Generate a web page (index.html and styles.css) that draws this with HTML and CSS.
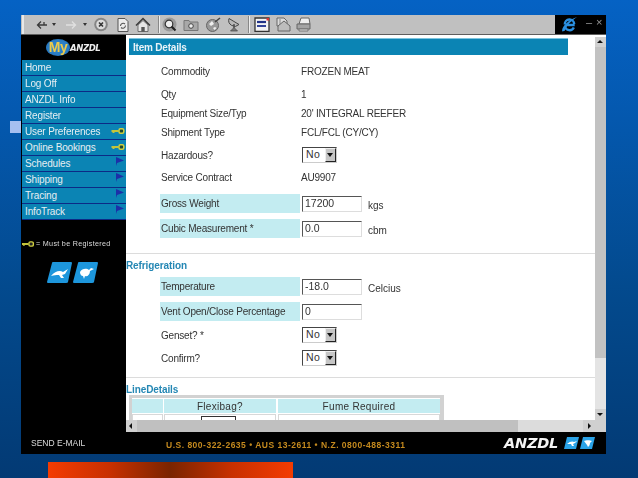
FILE: index.html
```html
<!DOCTYPE html>
<html lang="en">
<head>
<meta charset="utf-8">
<title>MyANZDL Item Details</title>
<link rel="stylesheet" href="styles.css">
</head>
<body>
<span class="bullet"></span>
<div class="window">
  <div class="toolbar">
    <div class="tools">
      <svg class="ic t-back" viewBox="0 0 12 15"><path d="M11 8H2M5 4.500 1.500 8 5 11.500M8 5v3" fill="none" stroke="#3a3a3a" stroke-width="1.300"/></svg>
      <i class="drop d1"></i>
      <svg class="ic t-fwd" viewBox="0 0 12 15"><path d="M1 8h9M7 4.500 10.500 8 7 11.500" fill="none" stroke="#e0e0e0" stroke-width="1.300"/></svg>
      <i class="drop d2"></i>
      <svg class="ic t-stop" viewBox="0 0 14 15"><circle cx="7" cy="7.500" r="6.800" fill="#858585"/><circle cx="7" cy="7.500" r="4.800" fill="#dcdcdc"/><path d="m5 5.500 4 4M9 5.500l-4 4" stroke="#333" stroke-width="1.600"/></svg>
      <svg class="ic t-ref" viewBox="0 0 12 15"><path d="M1 1.500h7l3 3v10H1z" fill="#ececec" stroke="#555"/><path d="M3.500 9a2.700 2.700 0 0 1 4.500-2M8.500 8.500A2.700 2.700 0 0 1 4 10.500" fill="none" stroke="#555" stroke-width="1.100"/></svg>
      <svg class="ic t-home" viewBox="0 0 16 15"><path d="M1 8.500 8 1.500l7 7" fill="none" stroke="#3a3a3a" stroke-width="1.500"/><path d="M3 8v6.500h10V8L8 3.500z" fill="#e6e6e6" stroke="#555" stroke-width=".8"/><path d="M6.300 10h3.400v4.500H6.300z" fill="#555"/></svg>
      <span class="sep s1"></span>
      <svg class="ic t-search" viewBox="0 0 15 15"><circle cx="7.500" cy="7.500" r="7" fill="#9a9a9a"/><circle cx="7" cy="7" r="3.800" fill="#eee" stroke="#333" stroke-width="1.200"/><path d="m9.500 9.500 4 4" stroke="#222" stroke-width="2.200"/></svg>
      <svg class="ic t-fav" viewBox="0 0 16 15"><path d="M1 3.500h5l1 1.500h8v8.500H1z" fill="#a8a8a8" stroke="#777"/><circle cx="8" cy="9" r="2.300" fill="#eee" stroke="#444"/></svg>
      <svg class="ic t-hist" viewBox="0 0 16 15"><circle cx="7.500" cy="8.500" r="6" fill="#999" stroke="#666"/><path d="M4 7l3-3 2 3-3 2zM8 11l2-1 1.500 1-2 2z" fill="#f0f0f0"/><path d="m10 5 5-4" stroke="#444" stroke-width="1.600"/></svg>
      <svg class="ic t-chan" viewBox="0 0 14 15"><path d="M2 1.500a6 6 0 0 0 10 6z" fill="#b8b8b8" stroke="#444"/><path d="M7 7v4" stroke="#444" stroke-width="1.300"/><path d="M3.500 14h7L7 10.500z" fill="#777" stroke="#444" stroke-width=".7"/></svg>
      <span class="sep s2"></span>
      <svg class="ic t-full" viewBox="0 0 16 15"><path d="M1 1h14v13.500H1z" fill="#f4f4f4" stroke="#333" stroke-width="1.300"/><path d="M3 5h9" stroke="#223388" stroke-width="2.200"/><path d="M3 9h9" stroke="#334499" stroke-width="2"/><path d="M12.500 1H15v2.500h-2.500z" fill="#d33"/></svg>
      <svg class="ic t-mail" viewBox="0 0 16 15"><path d="M2 1h7l3 3v5H2z" fill="#dcdcdc" stroke="#666"/><path d="M5 2v7" stroke="#888"/><path d="M3 9 9 4l6 5v5H3z" fill="#bdbdbd" stroke="#666"/></svg>
      <svg class="ic t-print" viewBox="0 0 15 15"><path d="M5 1h8l1 6H3z" fill="#eee" stroke="#666"/><path d="M1 7h13v5H1z" fill="#a4a4a4" stroke="#666"/><path d="M3 12h9v2H3z" fill="#ddd" stroke="#777"/></svg>
    </div>
    <div class="brand">
      <svg class="ie" viewBox="0 0 18 18"><path d="M14.500 9.500H5.200M4 9a5 5 0 0 1 10-.5M13.600 12.200A5 5 0 0 1 4.200 11" fill="none" stroke="#2a8fe0" stroke-width="2.500"/><path d="M1.500 16.500C-.5 13 7 4 17 1c-5 3.500-11 8-13 14.500z" fill="#2a8fe0"/></svg>
      <span class="wbtn">–</span><span class="wbtn">×</span>
    </div>
  </div>
  <div class="middle">
    <aside class="side">
      <div class="logo"><span class="my">My</span><span class="anzdl">ANZDL</span></div>
      <nav class="nav">
        <a>Home</a>
        <a>Log Off</a>
        <a>ANZDL Info</a>
        <a>Register</a>
        <a>User Preferences<svg class="key" viewBox="0 0 13 6"><path d="M0 2h7v2H3v1H1V4H0z" fill="#c4c43a"/><rect x="7.500" y="0.750" width="4.800" height="4.500" rx="1.500" fill="#1d4a30" stroke="#d0d040" stroke-width="1.500"/></svg></a>
        <a>Online Bookings<svg class="key" viewBox="0 0 13 6"><path d="M0 2h7v2H3v1H1V4H0z" fill="#c4c43a"/><rect x="7.500" y="0.750" width="4.800" height="4.500" rx="1.500" fill="#1d4a30" stroke="#d0d040" stroke-width="1.500"/></svg></a>
        <a>Schedules<svg class="flag" viewBox="0 0 9 9"><path d="M1 0 9 3.500 2 6 1 9z" fill="#1c2fa8"/></svg></a>
        <a>Shipping<svg class="flag" viewBox="0 0 9 9"><path d="M1 0 9 3.500 2 6 1 9z" fill="#1c2fa8"/></svg></a>
        <a>Tracing<svg class="flag" viewBox="0 0 9 9"><path d="M1 0 9 3.500 2 6 1 9z" fill="#1c2fa8"/></svg></a>
        <a>InfoTrack<svg class="flag" viewBox="0 0 9 9"><path d="M1 0 9 3.500 2 6 1 9z" fill="#1c2fa8"/></svg></a>
      </nav>
      <div class="legend"><svg class="key" viewBox="0 0 13 6"><path d="M0 2h7v2H3v1H1V4H0z" fill="#c4c43a"/><rect x="7.500" y="0.750" width="4.800" height="4.500" rx="1.500" fill="#222" stroke="#d0d040" stroke-width="1.500"/></svg><span>= Must be Registered</span></div>
      <div class="badges">
        <svg class="badge" viewBox="0 0 25 21"><path d="M6 0h18q1 0 1 1l-4 19q0 1-2 1H1q-1 0-1-1L5 1q0-1 1-1z" fill="#1d96dc"/><path d="M4 14c4-5 9-6 12-4l5-3-3 5-3 1 2 3h-3l-2-3c-3 0-5 0-8 1z" fill="#fff"/></svg>
        <svg class="badge" viewBox="0 0 25 21"><path d="M6 0h18q1 0 1 1l-4 19q0 1-2 1H1q-1 0-1-1L5 1q0-1 1-1z" fill="#1d96dc"/><path d="M7 10c2-4 7-4 9-2l2-2 3 1-4 2c0 4-3 6-5 5l-1 3-1-3c-2 0-3-2-3-4z" fill="#fff"/></svg>
      </div>
    </aside>
    <main class="pane">
      <div class="vport">
        <div class="scroll">
          <h1 class="title">Item Details</h1>
          <div class="row r-commodity"><span class="lab">Commodity</span><span class="val">FROZEN MEAT</span></div>
          <div class="row r-qty"><span class="lab">Qty</span><span class="val">1</span></div>
          <div class="row r-eq"><span class="lab">Equipment Size/Typ</span><span class="val">20' INTEGRAL REEFER</span></div>
          <div class="row r-ship"><span class="lab">Shipment Type</span><span class="val">FCL/FCL (CY/CY)</span></div>
          <div class="row r-haz"><span class="lab">Hazardous?</span><span class="sel">No<i class="arrow"></i></span></div>
          <div class="row r-svc"><span class="lab">Service Contract</span><span class="val">AU9907</span></div>
          <div class="row r-gross"><span class="lab band">Gross Weight</span><span class="inp">17200</span><span class="unit">kgs</span></div>
          <div class="row r-cubic"><span class="lab band">Cubic Measurement *</span><span class="inp">0.0</span><span class="unit">cbm</span></div>
          <hr class="rule r1">
          <h2 class="sect s-ref">Refrigeration</h2>
          <div class="row r-temp"><span class="lab band">Temperature</span><span class="inp">-18.0</span><span class="unit">Celcius</span></div>
          <div class="row r-vent"><span class="lab band">Vent Open/Close Percentage</span><span class="inp">0</span></div>
          <div class="row r-gen"><span class="lab">Genset? *</span><span class="sel">No<i class="arrow"></i></span></div>
          <div class="row r-conf"><span class="lab">Confirm?</span><span class="sel">No<i class="arrow"></i></span></div>
          <hr class="rule r2">
          <h2 class="sect s-line">LineDetails</h2>
          <div class="tablebox">
            <div class="thead"><span class="th c1"></span><span class="th c2">Flexibag?</span><span class="th c3">Fume Required</span></div>
            <div class="tbody"><span class="td c1"></span><span class="td c2"><b class="cutsel"></b></span><span class="td c3"></span></div>
          </div>
        </div>
        <div class="vbar"><span class="btn up"></span><span class="track"></span><span class="vlight"></span><span class="btn down"></span></div>
      </div>
      <div class="hbar"><span class="btn left"></span><span class="hthumb"></span><span class="htrack"></span><span class="btn right"></span><span class="corner"></span></div>
    </main>
  </div>
  <footer class="foot">
    <span class="mail">SEND E-MAIL</span>
    <span class="phones">U.S. 800-322-2635 • AUS 13-2611 • N.Z. 0800-488-3311</span>
    <span class="flogo">ANZDL</span>
    <svg class="fbadge" viewBox="0 0 15 12"><path d="M3 0h12l-3 12H0z" fill="#2aa2e6"/><path d="M3 7c3-3 6-3 7-2l3-1-2 2-2 1 1 2H8L7 7z" fill="#fff"/></svg>
    <svg class="fbadge" viewBox="0 0 15 12"><path d="M3 0h12l-3 12H0z" fill="#2aa2e6"/><path d="M4 4c2-1 6-1 8 0l-2 2c0 2-1 3-2 4L7 8C6 7 5 5 4 4z" fill="#fff"/></svg>
  </footer>
</div>
<div class="orange"></div>
</body>
</html>
```

FILE: styles.css
```css
* { box-sizing: border-box; }
html, body { margin: 0; height: 100%; overflow: hidden; }
body {
  position: relative;
  width: 638px;
  height: 478px;
  padding: 15px 32px 0 21px;
  background: linear-gradient(180deg, #0562c4 0%, #0458ae 25%, #034a8e 60%, #033a74 100%);
  font-family: "Liberation Sans", Arial, sans-serif;
  font-size: 10px;
  letter-spacing: -.2px;
  color: #333;
}
.bullet { position: absolute; left: 10px; top: 121px; width: 11px; height: 12px; background: #a5bff0; }
.window { width: 585px; height: 439px; display: flex; flex-direction: column; filter: blur(.4px); }

.toolbar { height: 20px; display: flex; background: #c0c0c0; border-bottom: 1px solid #5e5e5e; }
.tools { flex: 1; display: flex; align-items: center; border-left: 2px solid #e8e8e8; margin-left: 1px; padding-left: 12px; }
.ic { height: 15px; flex: none; }
.drop { width: 0; height: 0; border: 2px solid transparent; border-top: 3px solid #333; border-bottom: 0; flex: none; }
.t-back { width: 12px; }
.d1 { margin-left: 4px; }
.t-fwd { width: 12px; margin-left: 9px; }
.d2 { margin-left: 6px; }
.t-stop { width: 14px; margin-left: 7px; }
.t-ref { width: 12px; margin-left: 9px; }
.t-home { width: 16px; margin-left: 6px; }
.sep { width: 2px; height: 17px; flex: none; background: #888; border-right: 1px solid #eee; }
.s1 { margin: 0 2px 0 7px; }
.t-search { width: 15px; }
.t-fav { width: 16px; margin-left: 6px; }
.t-hist { width: 16px; margin-left: 6px; }
.t-chan { width: 14px; margin-left: 6px; }
.s2 { margin: 0 4px 0 7px; }
.t-full { width: 16px; }
.t-mail { width: 16px; margin-left: 5px; }
.t-print { width: 15px; margin-left: 5px; }
.brand { width: 51px; background: #000; display: flex; align-items: center; padding-left: 6px; color: #999; flex: none; }
.ie { width: 17px; height: 17px; margin-right: 8px; flex: none; }
.wbtn { font-size: 11px; width: 12px; line-height: 12px; margin-bottom: 5px; }

.middle { flex: 1; display: flex; min-height: 0; }
.side { width: 105px; background: #000; display: flex; flex-direction: column; flex: none; }
.logo { height: 25px; display: flex; align-items: center; padding-left: 25px; }
.my {
  font: bold 14px "Liberation Sans", sans-serif;
  letter-spacing: -.5px;
  color: #eccb4c;
  background: radial-gradient(ellipse at center, #2f86cc 0, #2a7cc4 60%, #1a5a9a 100%);
  border-radius: 50%;
  height: 17px;
  line-height: 17px;
  width: 24px;
  text-align: center;
}
.anzdl { font: italic bold 8.500px "DejaVu Sans", sans-serif; color: #eee; letter-spacing: -.4px; }
.nav { display: flex; flex-direction: column; padding-left: 1px; }
.nav a {
  height: 16px;
  padding: 0 1px 1px 3px;
  display: flex;
  justify-content: space-between;
  align-items: center;
  background: #0b84b4;
  border-bottom: 1px solid #0c2a86;
  color: #e6eef2;
  font-size: 10px;
  letter-spacing: -.15px;
  white-space: nowrap;
}
.key { width: 14px; height: 6px; flex: none; }
.flag { width: 9px; height: 9px; margin: -3px 1px 0 0; flex: none; }
.legend { display: flex; align-items: center; gap: 2px; margin-top: 19px; padding-left: 1px; color: #ddd; font-size: 7.200px; letter-spacing: .3px; white-space: nowrap; }
.legend .key { width: 12px; }
.badges { display: flex; gap: 1px; padding-left: 26px; margin-top: 14px; }
.badge { width: 25px; height: 21px; }

.pane { flex: 1; min-width: 0; display: flex; flex-direction: column; background: #fff; }
.vport { flex: 1; min-height: 0; display: flex; }
.scroll { flex: 1; min-width: 0; overflow: hidden; position: relative; padding: 3px 0 0; display: flex; flex-direction: column; }
.title { flex: none; margin: 0 0 0 3px; width: 439px; height: 17px; background: #0b84b4; border-top: 1px solid #7cc4de; color: #eaf4f8; font-size: 10px; font-weight: bold; line-height: 17px; padding-left: 4px; }
.row { flex: none; display: flex; align-items: center; padding-left: 34px; color: #333; }
.lab { width: 140px; flex: none; padding-left: 1px; }
.val { margin-left: 1px; }
.band { background: #c3ecf1; height: 19px; line-height: 19px; }
.inp {
  width: 60px; height: 16px; margin-left: 2px; padding: 0 0 0 2px; line-height: 13px;
  background: #fff; border: 1px solid; border-color: #555 #ddd #ddd #555; flex: none; font-size: 10.500px; letter-spacing: 0;
}
.unit { margin: 3px 0 0 6px; letter-spacing: 0; }
.sel {
  width: 35px; height: 16px; margin-left: 2px; padding-left: 3px; line-height: 13px; position: relative;
  border: 1px solid; border-color: #444 #ccc #ccc #444; flex: none; font-size: 10.500px; letter-spacing: .3px; background: #fff;
}
.arrow { position: absolute; right: 0; top: 0; width: 11px; height: 14px; background: #c6c6c6; border: 1px solid; border-color: #eee #222 #222 #eee; }
.arrow::after { content: ""; position: absolute; left: 1px; top: 4px; border: 3px solid transparent; border-top: 4px solid #111; border-bottom: 0; }
.r-commodity { margin-top: 9px; height: 14px; }
.r-qty { margin-top: 9px; height: 14px; }
.r-eq { margin-top: 5px; height: 14px; }
.r-ship { margin-top: 5px; height: 14px; }
.r-haz { margin-top: 8px; height: 16px; }
.r-svc { margin-top: 7px; height: 14px; }
.r-gross { margin-top: 10px; height: 19px; }
.r-cubic { margin-top: 6px; height: 19px; }
.rule { flex: none; width: 100%; height: 1px; margin: 0; border: 0; background: #dcdcdc; }
.r1 { margin-top: 15px; }
.sect { flex: none; margin: 0; color: #2487b4; font-size: 10px; font-weight: bold; line-height: 12px; letter-spacing: -.1px; }
.s-ref { margin-top: 6px; }
.r-temp { margin-top: 5px; height: 19px; }
.r-vent { margin-top: 6px; height: 19px; }
.r-gen { margin-top: 6px; height: 16px; }
.r-conf { margin-top: 7px; height: 16px; }
.r2 { margin-top: 11px; }
.s-line { margin-top: 6px; }
.tablebox { flex: none; margin: -1px 0 0 3px; width: 315px; height: 40px; background: #fff; border: 3px solid #d2d2d2; border-right-width: 4px; border-bottom: 0; padding: 1px 0 0 0; }
.thead, .tbody { display: flex; gap: 1px; }
.thead { height: 14px; margin-bottom: 1px; }
.tbody { height: 20px; }
.th { background: #c3ecf1; text-align: center; line-height: 15px; font-size: 10px; letter-spacing: .3px; }
.c1 { width: 31px; }
.c2 { width: 113px; margin-right: 1px; }
.c3 { width: 163px; }
.td { border: 1px solid #d8d8d8; border-bottom: 0; }
.c2.td { display: flex; justify-content: center; padding: 1px 2px 0 0; }
.cutsel { display: block; width: 35px; height: 10px; border: 1px solid #333; border-bottom: 0; }
.vbar { width: 11px; flex: none; display: flex; flex-direction: column; padding-top: 2px; background: #fff; }
.btn { display: block; flex: none; width: 11px; height: 10px; background: #d0d0d0; position: relative; }
.down { height: 11px; }
.track { flex: 1; background: #c2c2c2; }
.vlight { height: 51px; flex: none; background: #e4e4e4; }
.up::after { content: ""; position: absolute; left: 2px; top: 3px; border: 3px solid transparent; border-bottom: 3px solid #111; border-top: 0; }
.down::after { content: ""; position: absolute; left: 2px; top: 4px; border: 3px solid transparent; border-top: 3px solid #111; border-bottom: 0; }
.hbar { height: 12px; flex: none; display: flex; background: #c4c4c4; }
.left::after { content: ""; position: absolute; left: 3px; top: 3px; border: 3px solid transparent; border-right: 3px solid #111; border-left: 0; }
.right::after { content: ""; position: absolute; left: 5px; top: 3px; border: 3px solid transparent; border-left: 3px solid #111; border-right: 0; }
.hbar .btn { height: 12px; }
.hthumb { width: 381px; background: #c0c0c0; flex: none; }
.htrack { flex: 1; background: #dcdcdc; }
.corner { width: 12px; background: #d0d0d0; flex: none; }

.foot { height: 22px; flex: none; background: #000; display: flex; align-items: center; padding: 0 5px 0 10px; letter-spacing: 0; }
.mail { color: #dcdcdc; font-size: 8.500px; width: 135px; flex: none; }
.phones { color: #c58a1e; font-size: 8.500px; font-weight: bold; letter-spacing: .5px; width: 338px; flex: none; white-space: nowrap; margin-top: 3px; }
.flogo { color: #f4f4f4; font: italic bold 14.500px "DejaVu Sans", sans-serif; letter-spacing: -.2px; width: 59px; flex: none; }
.fbadge { width: 15px; height: 12px; flex: none; margin-left: 1px; }

.orange { position: absolute; left: 48px; top: 462px; width: 245px; height: 16px; background: linear-gradient(90deg, #f43c02 0%, #c83000 25%, #7a2400 50%, #c83000 75%, #f43c02 100%); }
```
